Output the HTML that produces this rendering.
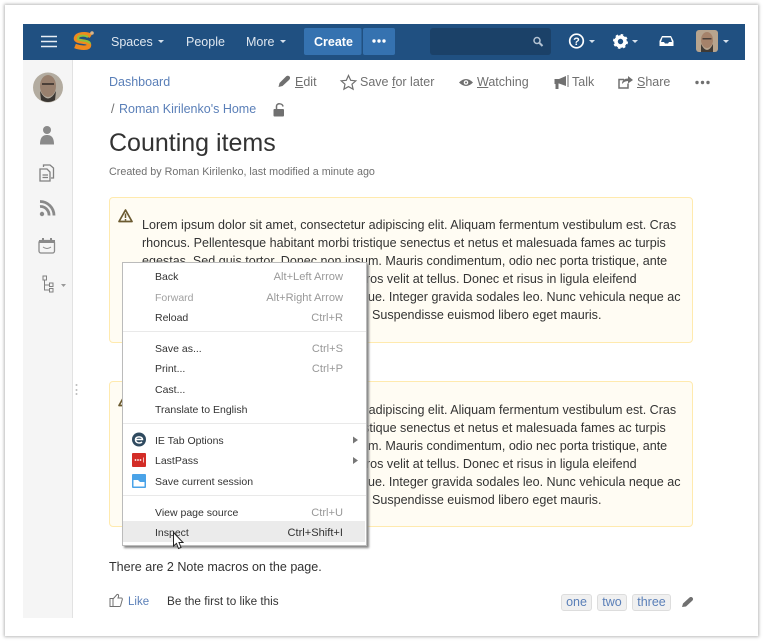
<!DOCTYPE html>
<html><head><meta charset="utf-8"><style>
html,body{margin:0;padding:0;background:#fff}
body{width:768px;height:642px;position:relative;overflow:hidden;font-family:"Liberation Sans",sans-serif;color:#333;filter:blur(.35px)}
.a{position:absolute;white-space:nowrap}
.t{position:absolute;white-space:nowrap;line-height:14px;font-size:12.5px;color:#707070}
.l{position:absolute;white-space:nowrap;line-height:14px;font-size:12.55px;color:#333;left:142px}
.n{position:absolute;white-space:nowrap;line-height:16px;font-size:12.5px;color:#dfe7f0;top:34px}
.note{position:absolute;left:109px;width:582px;height:144px;background:#fffcf3;border:1px solid #ffeaae;border-radius:4px}
.m{position:absolute;left:155px;font-size:10.5px;line-height:14px;color:#333;white-space:nowrap}
.s{position:absolute;right:24px;font-size:11.1px;line-height:14px;color:#999;white-space:nowrap}
.sep{position:absolute;left:1px;right:1px;height:1px;background:#e9e9e9}
.tag{position:absolute;top:594px;height:15px;line-height:15px;background:#f0f0f0;border:1px solid #ddd;border-radius:3px;color:#5a7fb8;font-size:12.5px;text-align:center}
svg{position:absolute;overflow:visible}
u{text-decoration:underline}
</style></head><body>
<div class="a" style="left:5px;top:5px;width:753px;height:631px;background:#fff;box-shadow:0 0 3px 1px #bbb"></div>
<div class="a" style="left:23px;top:60px;width:49px;height:558px;background:#f5f5f5;border-right:1px solid #e2e2e2"></div>
<div class="a" style="left:23px;top:24px;width:722px;height:36px;background:#205081"></div>

<svg style="left:0;top:0" width="768" height="642">
<path d="M41 36.500H57M41 41.500H57M41 46.500H57" stroke="#e8eef5" stroke-width="1.600" fill="none"/>
<path d="M91 36C86 33 77 34 76 38C75 43 89 40 89 45C89 49 80 48 75 46" stroke="#f08a1e" stroke-width="4.500" fill="none"/>
<path d="M88 37C85 35 79 35 78 38C77 42 90 39 90 44" stroke="#8fc23c" stroke-width="2" fill="none"/>
<circle cx="92" cy="33" r="1.800" fill="#d8b48a"/>
<path d="M158 40h6l-3 3z M280 40h6l-3 3z M589 40h6l-3 3z M632 40h6l-3 3z M723 40h6l-3 3z" fill="#d5e0ec"/>
<rect x="304" y="28" width="57.500" height="27" rx="2" fill="#3572b0"/>
<rect x="363" y="28" width="32" height="27" rx="2" fill="#3572b0"/>
<circle cx="374" cy="41" r="1.700" fill="#fff"/><circle cx="379" cy="41" r="1.700" fill="#fff"/><circle cx="384" cy="41" r="1.700" fill="#fff"/>
<rect x="430" y="28" width="121" height="27" rx="3" fill="#1b4168"/>
<circle cx="537" cy="40.500" r="3" fill="none" stroke="#b4c3d3" stroke-width="1.500"/><path d="M539.500 43L542.500 46" stroke="#b4c3d3" stroke-width="2"/>
<circle cx="576.500" cy="41" r="6.800" fill="none" stroke="#fff" stroke-width="1.700"/>
<text x="576.500" y="45" text-anchor="middle" font-family="Liberation Sans" font-weight="bold" font-size="11" fill="#fff">?</text>
<circle cx="620.500" cy="41.500" r="4.500" fill="none" stroke="#fff" stroke-width="3.600"/>
<circle cx="620.500" cy="41.500" r="6.500" fill="none" stroke="#fff" stroke-width="2" stroke-dasharray="2.500 2.600"/>
<path d="M659.500 46V41L662 36H671L673.500 41V46Z" fill="#fff"/><path d="M662.500 37.500H670.500L672 42H669L668 43.500H665L664 42H661Z" fill="#205081"/>
<rect x="696" y="30" width="22" height="22" rx="3" fill="#b7a48e"/>
<ellipse cx="707" cy="40" rx="6" ry="8" fill="#a5826a"/><path d="M701 44Q707 56 713 44V52H701Z" fill="#3f3a35"/><rect x="702.500" y="38" width="9" height="1.500" fill="#4a3f38"/>
<circle cx="48" cy="87.500" r="15" fill="#b3aca0"/>
<ellipse cx="48" cy="86" rx="8" ry="11" fill="#98806e"/><path d="M40 91Q48 106 56 91L55 100Q48 104 41 100Z" fill="#3a3632"/><rect x="42" y="83" width="12" height="2" fill="#4a3f38"/>
<circle cx="47" cy="130" r="4" fill="#8a8a8a"/><path d="M40 144.500C40 137 43 135 47 135C51 135 54 137 54 144.500Z" fill="#8a8a8a"/>
<path d="M43.500 167V165H50L53.500 168V178H51M41 169H47L50 172V181H40V169Z M42.500 175H48M42.500 177.500H48" fill="none" stroke="#808080" stroke-width="1.300"/>
<circle cx="42" cy="214" r="2.200" fill="#8a8a8a"/>
<path d="M40 206.500A8.500 8.500 0 0 1 49 215.500M40 201.500A14 14 0 0 1 54 215.500" fill="none" stroke="#8a8a8a" stroke-width="2.800"/>
<rect x="39" y="240.500" width="15.500" height="12.500" rx="2" fill="none" stroke="#8a8a8a" stroke-width="1.300"/>
<path d="M39 240H55V243H39Z M42 238H44V241H42Z M50 238H52V241H50Z" fill="#8a8a8a"/><path d="M43 247Q47 250 51 247" fill="none" stroke="#8a8a8a"/>
<path d="M44.500 280V290H49M44.500 285H49" fill="none" stroke="#808080"/>
<rect x="43" y="276" width="3.500" height="4" fill="none" stroke="#808080"/><rect x="49.500" y="283" width="3.500" height="3.500" fill="none" stroke="#808080"/><rect x="49.500" y="288.500" width="3.500" height="3.500" fill="none" stroke="#808080"/>
<path d="M61 284h5l-2.500 3z" fill="#999"/>
<circle cx="76.500" cy="385" r="1" fill="#bbb"/><circle cx="76.500" cy="390" r="1" fill="#bbb"/><circle cx="76.500" cy="394" r="1" fill="#bbb"/>
<path d="M278.500 87L279.500 83L286 76.500C287 75.500 288.500 75.500 289.500 76.500C290.500 77.500 290 79 289 80L282.500 86Z" fill="#707070"/>
<path d="M348.500 75.500L350.700 80.300L355.800 80.800L352 84.200L353.100 89.200L348.500 86.600L343.900 89.200L345 84.200L341.200 80.800L346.300 80.300Z" fill="none" stroke="#707070" stroke-width="1.200"/>
<path d="M459 82.500Q466 75.500 473 82.500Q466 89.500 459 82.500Z" fill="#707070"/><circle cx="466" cy="82.500" r="2.300" fill="#fff"/><circle cx="466" cy="82.500" r="1" fill="#707070"/>
<path d="M554.500 79H559L566 76V86L559 83.500H558.500V89H555.500V84H554.500Z" fill="#707070"/><path d="M568 75V87" stroke="#707070"/>
<path d="M628 83.500V88H619V79.500H624" fill="none" stroke="#707070" stroke-width="1.500"/><path d="M622 84C622 80 625 78.500 628 78.500V76L633 80L628 83.500V81C625.500 81 623.500 82 622 84Z" fill="#707070"/>
<circle cx="697" cy="82.500" r="1.700" fill="#707070"/><circle cx="702.500" cy="82.500" r="1.700" fill="#707070"/><circle cx="708" cy="82.500" r="1.700" fill="#707070"/>
<rect x="273.500" y="109" width="10.500" height="7.500" rx="1" fill="#707070"/><path d="M276.500 109V106C276.500 103 282.500 103 283 106.500" fill="none" stroke="#707070" stroke-width="1.500"/>
<path d="M682 607L683 603.500L689.500 597.500C690.500 596.700 691.800 597 692.500 597.700C693.300 598.500 693.200 599.500 692.500 600.500L686 606.500Z" fill="#707070"/>
<path d="M110 598.500H113V606.500H110ZM113 599L117 594.500C118 594 119 595 118.500 596.500L118 598H121.500C122.500 598 122.500 599.500 122 600.500L120.500 606C120.300 606.500 120 606.500 119.500 606.500H113" fill="none" stroke="#707070" stroke-width="1"/>
</svg>

<div class="n" style="left:111px">Spaces</div>
<div class="n" style="left:186px">People</div>
<div class="n" style="left:246px">More</div>
<div class="n" style="left:314px;color:#fff;font-weight:bold">Create</div>

<div class="t" style="left:109px;top:75px;color:#5a7fb8">Dashboard</div>
<div class="t" style="left:295px;top:75px"><u>E</u>dit</div>
<div class="t" style="left:360px;top:75px">Save <u>f</u>or later</div>
<div class="t" style="left:477px;top:75px"><u>W</u>atching</div>
<div class="t" style="left:572px;top:75px">Talk</div>
<div class="t" style="left:637px;top:75px"><u>S</u>hare</div>
<div class="t" style="left:111px;top:102px;color:#707070">/</div>
<div class="t" style="left:119px;top:102px;color:#5a7fb8">Roman Kirilenko's Home</div>
<div class="a" style="left:109px;top:128px;font-size:25px;line-height:30px;color:#333">Counting items</div>
<div class="t" style="left:109px;top:165px;font-size:10.75px;color:#707070">Created by Roman Kirilenko, last modified a minute ago</div>

<div class="note" style="top:197px"></div>
<div class="note" style="top:381px"></div>
<svg style="left:0;top:0" width="768" height="642">
<path d="M125.500 210L132 221.500H119Z" fill="none" stroke="#6b5a30" stroke-width="1.700" stroke-linejoin="round"/><path d="M125.500 213.500V218M125.500 219V220.500" stroke="#6b5a30" stroke-width="1.500"/>
<path d="M125.500 394L132 405.500H119Z" fill="none" stroke="#6b5a30" stroke-width="1.700" stroke-linejoin="round"/>
</svg>

<div class="l" style="top:218px">Lorem ipsum dolor sit amet, consectetur adipiscing elit. Aliquam fermentum vestibulum est. Cras</div>
<div class="l" style="top:236px">rhoncus. Pellentesque habitant morbi tristique senectus et netus et malesuada fames ac turpis</div>
<div class="l" style="top:254px">egestas. Sed quis tortor. Donec non ipsum. Mauris condimentum, odio nec porta tristique, ante</div>
<div class="l" style="top:272px;left:366px">ros velit at tellus. Donec et risus in ligula eleifend</div>
<div class="l" style="top:290px;left:361px">que. Integer gravida sodales leo. Nunc vehicula neque ac</div>
<div class="l" style="top:308px;left:365px">. Suspendisse euismod libero eget mauris.</div>

<div class="l" style="top:403px">Lorem ipsum dolor sit amet, consectetur adipiscing elit. Aliquam fermentum vestibulum est. Cras</div>
<div class="l" style="top:421px">rhoncus. Pellentesque habitant morbi tristique senectus et netus et malesuada fames ac turpis</div>
<div class="l" style="top:439px">egestas. Sed quis tortor. Donec non ipsum. Mauris condimentum, odio nec porta tristique, ante</div>
<div class="l" style="top:457px;left:366px">ros velit at tellus. Donec et risus in ligula eleifend</div>
<div class="l" style="top:475px;left:361px">que. Integer gravida sodales leo. Nunc vehicula neque ac</div>
<div class="l" style="top:493px;left:365px">. Suspendisse euismod libero eget mauris.</div>

<div class="a" style="left:122px;top:262px;width:243px;height:282px;background:#fff;border:1px solid #bbb;box-shadow:2px 2px 2px #888"></div>
<div class="a" style="left:123px;top:521px;width:242px;height:21px;background:#ebebeb"></div>
<div class="a" style="left:122px;top:262px;width:245px;height:284px">
<div class="m" style="left:33px;top:8px">Back</div><div class="s" style="top:8px">Alt+Left Arrow</div>
<div class="m" style="left:33px;top:29px;color:#a0a0a0">Forward</div><div class="s" style="top:29px">Alt+Right Arrow</div>
<div class="m" style="left:33px;top:49px">Reload</div><div class="s" style="top:49px">Ctrl+R</div>
<div class="sep" style="top:69px"></div>
<div class="m" style="left:33px;top:80px">Save as...</div><div class="s" style="top:80px">Ctrl+S</div>
<div class="m" style="left:33px;top:100px">Print...</div><div class="s" style="top:100px">Ctrl+P</div>
<div class="m" style="left:33px;top:121px">Cast...</div>
<div class="m" style="left:33px;top:141px">Translate to English</div>
<div class="sep" style="top:161px"></div>
<div class="m" style="left:33px;top:172px">IE Tab Options</div>
<div class="m" style="left:33px;top:192px">LastPass</div>
<div class="m" style="left:33px;top:213px">Save current session</div>
<div class="sep" style="top:233px"></div>
<div class="m" style="left:33px;top:244px">View page source</div><div class="s" style="top:244px">Ctrl+U</div>
<div class="m" style="left:33px;top:264px">Inspect</div><div class="s" style="top:264px;color:#333">Ctrl+Shift+I</div>
</div>
<svg style="left:0;top:0" width="768" height="642">
<circle cx="139" cy="439.500" r="7" fill="#2f4a5f"/><path d="M135.500 439.500H142.500C142.500 436 135.500 436 135.500 439.500C135.500 443.500 140 443.500 142 442" fill="none" stroke="#fff" stroke-width="1.500"/>
<rect x="132" y="453" width="14" height="14" rx="1" fill="#d32d27"/><circle cx="135.500" cy="460" r=".9" fill="#fff"/><circle cx="138" cy="460" r=".9" fill="#fff"/><circle cx="140.500" cy="460" r=".9" fill="#fff"/><path d="M143.500 457.500V462.500" stroke="#fff" stroke-width=".7"/>
<rect x="132" y="474" width="14" height="14" rx="1" fill="#4aa3e8"/><path d="M133.500 480H138L140 482H144.500V486.500H133.500Z" fill="#fff"/>
<path d="M353 436.500l5 3.500-5 3.500zM353 457l5 3.500-5 3.500z" fill="#777"/>
<path d="M173.500 532.500V546L176.500 543.500L178.500 548.500L181 547.500L179 542.500H183Z" fill="#fff" stroke="#222" stroke-width="1"/>
</svg>

<div class="l" style="left:109px;top:560px">There are 2 Note macros on the page.</div>
<div class="t" style="left:128px;top:595px;font-size:11.5px;color:#5a7fb8">Like</div>
<div class="t" style="left:167px;top:595px;font-size:11.75px;color:#333">Be the first to like this</div>
<div class="tag" style="left:561px;width:29px">one</div>
<div class="tag" style="left:597px;width:28px">two</div>
<div class="tag" style="left:632px;width:37px">three</div>
</body></html>
